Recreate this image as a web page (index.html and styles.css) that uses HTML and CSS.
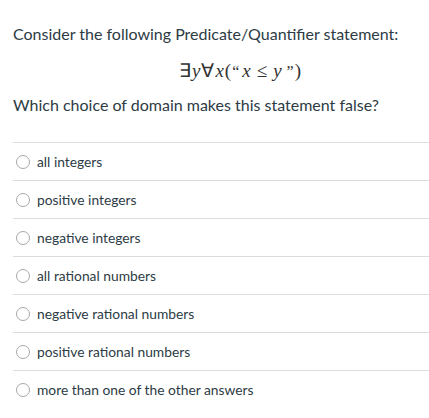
FILE: index.html
```html
<!DOCTYPE html>
<html>
<head>
<meta charset="utf-8">
<link rel="stylesheet" href="styles.css">
</head>
<body>
<div class="quiz">
  <p class="prompt">Consider the following Predicate/Quantifier statement:</p>
  <p class="math"><span class="sym">∃</span><i>y</i><span class="sym">∀</span><i>x</i><span class="paren">(</span><span class="q">“</span><i>x</i><span class="le">≤</span><i>y</i><span class="q q2">”</span><span class="paren">)</span></p>
  <p class="prompt question">Which choice of domain makes this statement false?</p>
  <ul class="answers">
    <li class="answer"><span class="radio"></span><span class="label">all integers</span></li>
    <li class="answer"><span class="radio"></span><span class="label">positive integers</span></li>
    <li class="answer"><span class="radio"></span><span class="label">negative integers</span></li>
    <li class="answer"><span class="radio"></span><span class="label">all rational numbers</span></li>
    <li class="answer"><span class="radio"></span><span class="label">negative rational numbers</span></li>
    <li class="answer"><span class="radio"></span><span class="label">positive rational numbers</span></li>
    <li class="answer"><span class="radio"></span><span class="label">more than one of the other answers</span></li>
  </ul>
</div>
</body>
</html>
```
FILE: styles.css
```css
html, body {
  margin: 0;
  padding: 0;
  background: #fff;
}
.quiz {
  padding: 22px 0 0 13px;
  font-family: Lato, "Liberation Sans", sans-serif;
  color: #2d3b45;
}
.prompt {
  margin: 0;
  font-size: 16px;
  line-height: 24px;
}
.math {
  margin: 13px 0 0 0;
  padding-left: 38px;
  text-align: center;
  font-family: "Liberation Serif", serif;
  font-size: 19px;
  line-height: 24px;
  color: #333;
}
.math i {
  font-style: italic;
  margin: 0 1px;
}
.math .q {
  margin: 0 2px 0 1px;
  font-size: 16px;
}
.math .q2 {
  margin: 0 1px 0 4px;
}
.math .le {
  margin: 0 5px;
}
.question {
  margin-top: 9px;
}
.answers {
  list-style: none;
  margin: 25px 0 0 0;
  padding: 0;
}
.answer {
  display: flex;
  align-items: center;
  height: 37px;
  border-top: 1px solid #dcdcdc;
  font-size: 13.8px;
}
.radio {
  width: 14px;
  height: 14px;
  border: 1px solid #a8a8a8;
  border-radius: 50%;
  margin: 0 7px 0 3px;
  box-sizing: border-box;
  background: #fff;
  flex: none;
}
```
